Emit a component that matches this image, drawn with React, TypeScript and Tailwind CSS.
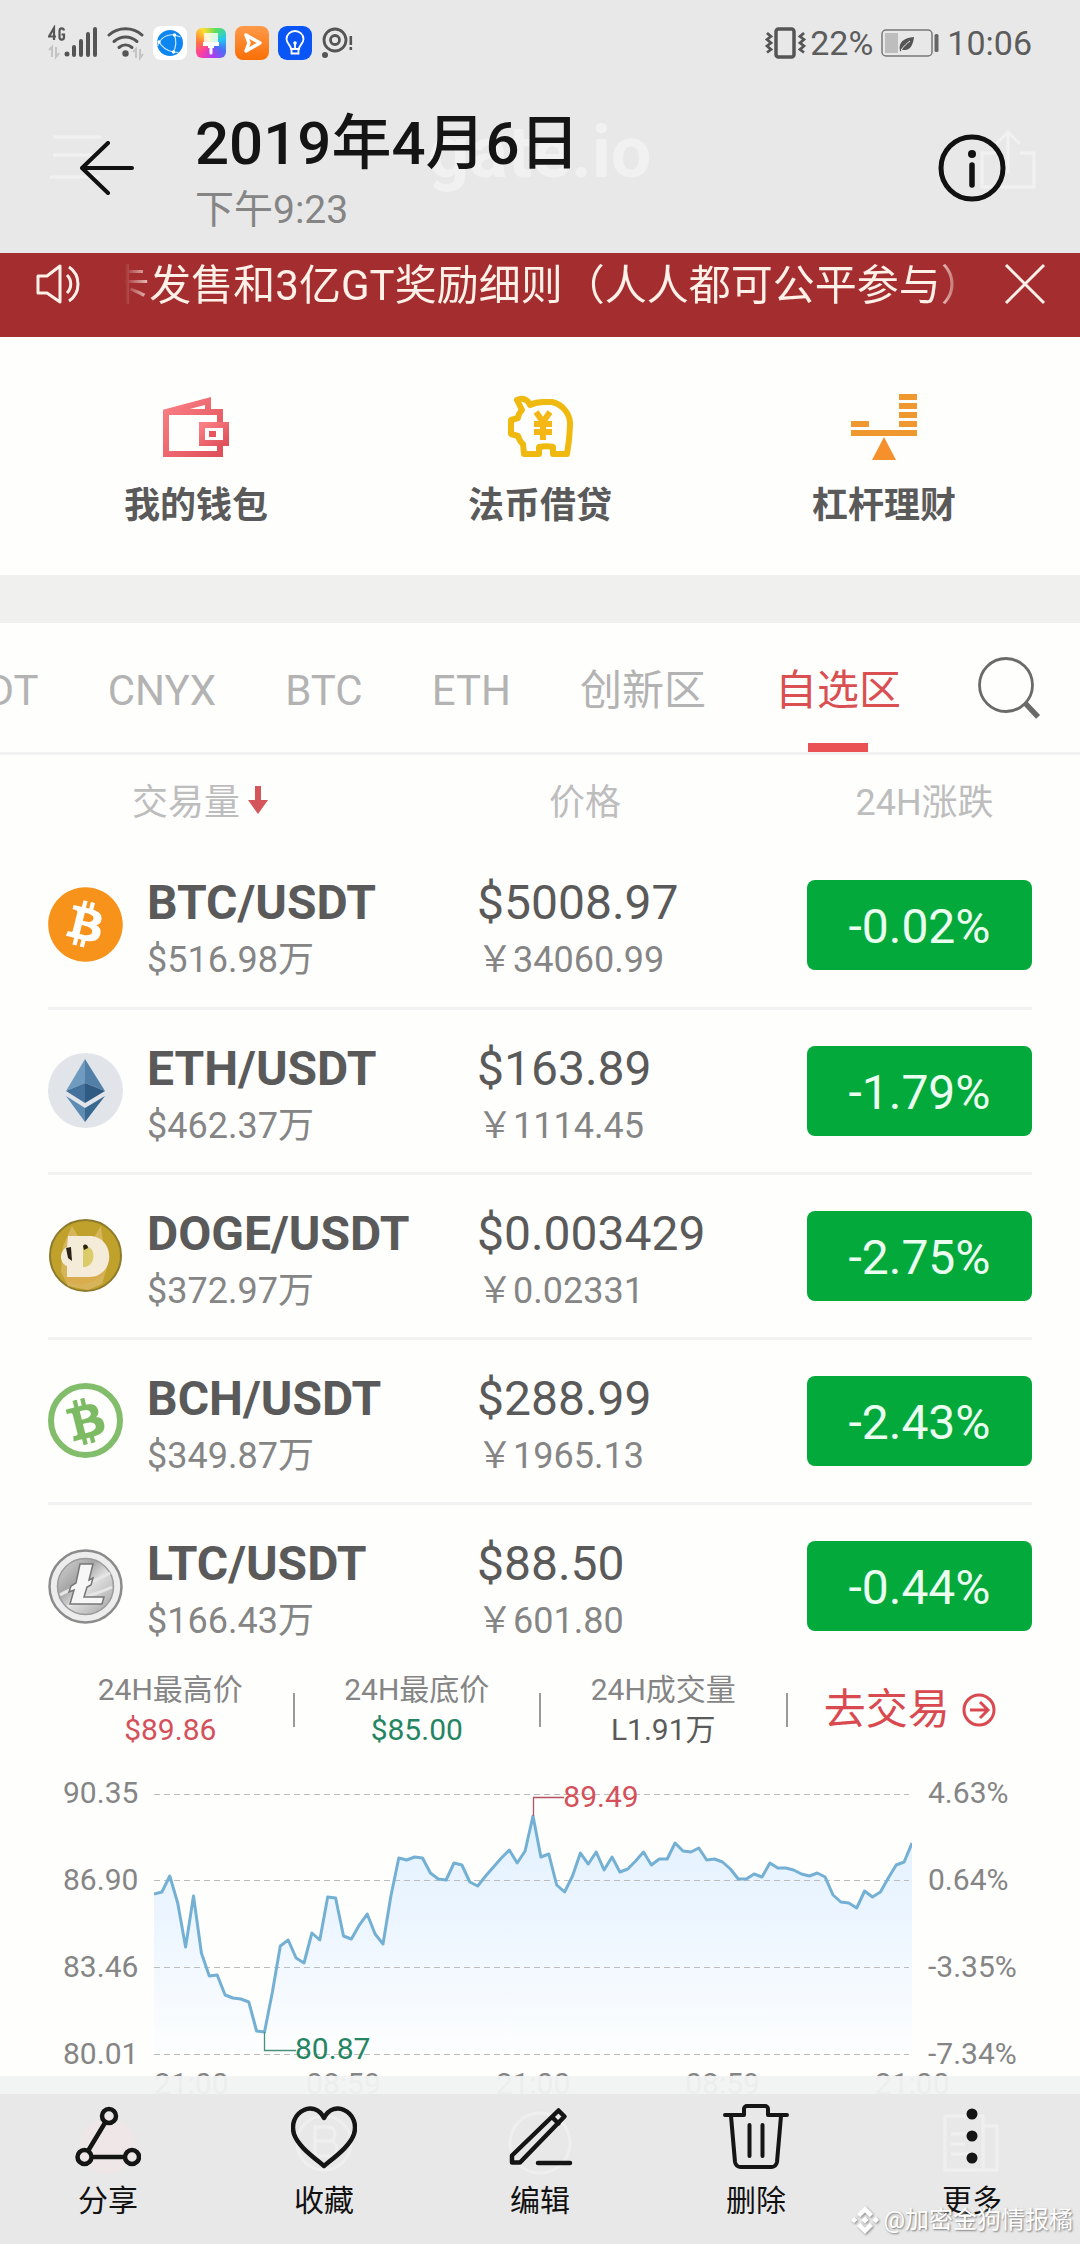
import type { ReactNode } from "react";
import { FaBitcoin, FaBtc } from "react-icons/fa";

/* ---------- status bar ---------- */

function SignalIcon() {
  return (
    <svg className="h-9 w-[50px]" viewBox="0 0 50 36" fill="#555">
      <g fill="none" stroke="#555" strokeWidth="2.2">
        <path d="M6 15V3L1 11.500H8" />
        <path d="M16 5.500C15.500 2.500 11.500 2.500 11.500 6V12C11.500 15.500 16 15.500 16 12V9.500H13.500" />
      </g>
      <g fill="none" stroke="#c4c4c4" strokeWidth="2">
        <path d="M1 25l3-3v10M8 22v10l3-4" />
      </g>
      <circle cx="19" cy="29" r="2.500" />
      <rect x="24" y="20" width="4" height="12" rx="2" />
      <rect x="31" y="14" width="4" height="18" rx="2" />
      <rect x="38" y="7" width="4" height="25" rx="2" />
      <rect x="45" y="2" width="4" height="30" rx="2" />
    </svg>
  );
}

function WifiIcon() {
  return (
    <svg className="h-9 w-[37px]" viewBox="0 0 37 36" fill="none">
      <g stroke="#555" strokeWidth="3" strokeLinecap="round">
        <path d="M2 10C11 1.500 26 1.500 35 10" />
        <path d="M7 16.500c7-6 16-6 23 0" />
        <path d="M12 22.500c4-3.500 9-3.500 13 0" />
      </g>
      <circle cx="18.500" cy="28.500" r="3.200" fill="#555" />
      <path d="M26 27l3-3v9M33 24v9l3-4" stroke="#c4c4c4" strokeWidth="2" />
    </svg>
  );
}

function BrowserAppIcon() {
  return (
    <svg className="size-[34px]" viewBox="0 0 34 34">
      <rect width="34" height="34" rx="8" fill="#fff" />
      <circle cx="17" cy="17" r="13" fill="#0e86f0" />
      <g fill="none" stroke="#cfeaff" strokeWidth="1.200">
        <path d="M6 16C11 9 16 8 22 9" />
        <path d="M21.500 9c2 6 2 11-1 17" />
        <path d="M6 16c3 5 8 9 14.500 10" />
        <path d="M21.500 9l6 2M20.500 26l5 .5M6 16L4.500 20" />
      </g>
      <circle cx="21.500" cy="9" r="1.700" fill="#fff" />
      <circle cx="6" cy="16" r="1.700" fill="#fff" />
      <circle cx="20.500" cy="26" r="1.700" fill="#fff" />
    </svg>
  );
}

function ThemeAppIcon() {
  return (
    <div className="size-[30px] rounded-md bg-[conic-gradient(from_20deg,#5ee05a,#21c7f0,#4a6cf5,#b43df0,#ff3f9b,#ff7b3a,#ffdc2e,#5ee05a)]">
      <svg className="size-[30px]" viewBox="0 0 30 30" fill="#fff">
        <path d="M8 5h14v9H8z" opacity=".8" />
        <path d="M7 14h16v4h-5v2h-6v-2H7z" />
        <path d="M13.500 20h3v5a1.500 1.500 0 0 1-3 0z" />
      </svg>
    </div>
  );
}

function VideoAppIcon() {
  return (
    <svg className="size-[34px]" viewBox="0 0 34 34">
      <defs>
        <linearGradient id="video" x1="0" y1="0" x2="0" y2="1">
          <stop offset="0" stopColor="#ff9a4a" />
          <stop offset="1" stopColor="#f96f06" />
        </linearGradient>
      </defs>
      <rect width="34" height="34" rx="8" fill="url(#video)" />
      <path
        d="M11 9l14 8-14 8 3-8z"
        fill="none"
        stroke="#fff"
        strokeLinejoin="round"
        strokeWidth="3.500"
      />
    </svg>
  );
}

function TipsAppIcon() {
  return (
    <svg className="size-[34px]" viewBox="0 0 34 34">
      <rect width="34" height="34" rx="9" fill="#0a55f5" />
      <g fill="none" stroke="#fff" strokeWidth="1.800">
        <path d="M13 23c0-4-4.500-5-4.500-10a8.500 8 0 0 1 17 0c0 5-4.500 6-4.500 10z" />
        <path d="M17 17v6M13.500 24v3.500h7V24" />
      </g>
      <circle cx="17" cy="17" r="1.800" fill="#fff" />
    </svg>
  );
}

function EyeAlertIcon() {
  return (
    <svg className="h-9 w-8" viewBox="0 0 32 36" fill="#555">
      <circle cx="14" cy="15" r="11" fill="none" stroke="#555" strokeWidth="2.800" />
      <circle cx="14" cy="15" r="4.500" fill="none" stroke="#555" strokeWidth="2.800" />
      <circle cx="4" cy="30" r="3" />
      <path d="M28.500 11h2.600v9h-2.600zM28.500 22h2.600v3h-2.600z" />
    </svg>
  );
}

function VibrateIcon() {
  return (
    <svg className="h-9 w-[41px]" viewBox="0 0 41 36" fill="none" stroke="#555">
      <rect x="11" y="4" width="18" height="28" rx="2.500" strokeWidth="3.500" />
      <path
        d="M2 8l4 3.500-4 3 4 3.500-4 3 4 3.500-4 3M39 8l-4 3.500 4 3-4 3.500 4 3-4 3.500 4 3"
        strokeWidth="2.800"
      />
    </svg>
  );
}

function BatteryIcon() {
  return (
    <svg className="h-9 w-[58px]" viewBox="0 0 58 36">
      <rect x="1" y="5" width="50" height="26" rx="4" fill="none" stroke="#777" strokeWidth="1.500" />
      <rect x="4" y="8" width="13" height="20" fill="#bdbdbd" />
      <path d="M19 26c-2-9 4-13 14-14-1 9-5 15-12 12.500l-1.500 2z" fill="#555" />
      <path d="M20 25c3-4 6-7 9-9" stroke="#e8e8e8" fill="none" />
      <rect x="53.500" y="9" width="4" height="18" rx="1.500" fill="#666" />
    </svg>
  );
}

function StatusBar() {
  return (
    <div className="flex h-[86px] items-center justify-between px-12 text-[34px] text-[#5c5c5c]">
      <div className="flex items-center gap-[9px]">
        <SignalIcon />
        <WifiIcon />
        <BrowserAppIcon />
        <ThemeAppIcon />
        <VideoAppIcon />
        <TipsAppIcon />
        <EyeAlertIcon />
      </div>
      <div className="flex items-center gap-1">
        <VibrateIcon />
        <span>22%</span>
        <span className="px-1">
          <BatteryIcon />
        </span>
        <span>10:06</span>
      </div>
    </div>
  );
}

/* ---------- photo header ---------- */

function Header() {
  return (
    <header className="relative bg-[#e8e8e8]">
      <div
        aria-hidden="true"
        className="pointer-events-none absolute inset-0 text-[#f1f1f1]"
      >
        <svg className="absolute top-[132px] left-12 h-14 w-16" viewBox="0 0 64 56">
          <path d="M5 5h48M5 23h40M2 45h50" stroke="currentColor" strokeWidth="3" />
        </svg>
        <span className="absolute top-[108px] left-[428px] font-bold text-[72px] leading-[90px]">
          gate.io
        </span>
        <svg
          className="absolute top-[128px] right-11 h-16 w-14"
          fill="none"
          stroke="currentColor"
          strokeWidth="3"
          viewBox="0 0 56 64"
        >
          <path d="M16 25H2v34h52V25H40M28 45V4M16 16L28 4l12 12" />
        </svg>
      </div>
      <div className="relative">
        <StatusBar />
        <div className="flex h-[167px] items-start pt-12 pr-[74px] pl-20">
          <button aria-label="返回" className="mr-[61px] flex h-[68px] items-center" type="button">
            <svg className="size-[54px]" viewBox="0 0 54 54" fill="none">
              <path
                d="M52 27H2M28 2L2 27l26 25"
                stroke="#111"
                strokeLinecap="round"
                strokeLinejoin="round"
                strokeWidth="4"
              />
            </svg>
          </button>
          <div className="-mt-6.5 flex-1">
            <h1 className="font-medium text-[#141414] text-[60px] leading-[72px]">
              2019年4月6日
            </h1>
            <p className="text-[#858585] text-[39px] leading-[60px]">下午9:23</p>
          </div>
          <button aria-label="详情" type="button">
            <svg className="size-[68px]" viewBox="0 0 68 68">
              <circle cx="34" cy="34" r="31" fill="none" stroke="#111" strokeWidth="5" />
              <circle cx="34" cy="20" r="4" fill="#111" />
              <path d="M34 31v20" stroke="#111" strokeLinecap="round" strokeWidth="5.500" />
            </svg>
          </button>
        </div>
      </div>
    </header>
  );
}

function Notice() {
  return (
    <div className="flex h-[84px] items-start bg-[#a32d2f] text-[#fff0e8]">
      <div className="flex h-[62px] w-[124px] items-center pl-9">
        <svg
          className="h-10 w-[45px]"
          fill="none"
          stroke="currentColor"
          strokeWidth="3"
          viewBox="0 0 45 40"
        >
          <path d="M2 12h9L24 2v36L11 29H2z" strokeLinejoin="round" />
          <path d="M31 11c5 5 5 13 0 18M33 3c12 8 12 26 0 34" />
        </svg>
      </div>
      <p className="flex h-16 min-w-0 flex-1 items-center justify-center overflow-hidden whitespace-nowrap text-[42px] [mask-image:linear-gradient(to_right,transparent,#000_32px,#000_calc(100%-32px),transparent)]">
        卡发售和3亿GT奖励细则（人人都可公平参与）
      </p>
      <button
        aria-label="关闭"
        className="flex h-[62px] w-[114px] items-center justify-center pl-1"
        type="button"
      >
        <svg className="size-11" viewBox="0 0 44 44">
          <path d="M3 3l38 38M41 3L3 41" stroke="currentColor" strokeWidth="3" />
        </svg>
      </button>
    </div>
  );
}

/* ---------- quick actions ---------- */

function WalletIcon() {
  return (
    <svg className="size-[66px]" viewBox="0 0 66 66" fill="none">
      <defs>
        <linearGradient id="wallet" x1="0" y1="0" x2="1" y2="1">
          <stop offset="0" stopColor="#fa7f84" />
          <stop offset="1" stopColor="#e0505a" />
        </linearGradient>
      </defs>
      <g stroke="url(#wallet)" strokeWidth="6">
        <path d="M3 18h54v12M57 49v11H3V18L45 7v10" />
        <path d="M39 31h24v18H39z" />
      </g>
      <rect x="46" y="37" width="7" height="6" fill="#e5565f" />
    </svg>
  );
}

function PiggyIcon() {
  return (
    <svg className="size-[66px]" viewBox="0 0 66 66" fill="none">
      <g stroke="#f0b90f" strokeLinejoin="round" strokeWidth="6">
        <path d="M10 6c6-3 11 0 13 5 4-2 8-3 14-3h8c10 2 19 12 18 24l-1 14-2 14H46v-7c-4-1-9-1-14 0v7H17l-1-10c-3-2-4-5-5-8l-7-2V26l7-2c0-3 1-5 4-8z" />
      </g>
      <path d="M29 18l7 10 7-10M36 27v19M27 30h18M27 38h18" stroke="#f5b716" strokeWidth="6" />
    </svg>
  );
}

function LeverIcon() {
  return (
    <svg className="size-[66px]" viewBox="0 0 66 66" fill="#ef982f">
      <path d="M48 0h18v6H48zM48 9h18v6H48zM48 18h18v6H48zM48 27h18v6H48zM0 27h18v6H0zM0 36h66v6H0z" />
      <path d="M33 43l12 23H21z" fill="#f5902c" />
    </svg>
  );
}

function QuickAction({ icon, label }: { icon: ReactNode; label: string }) {
  return (
    <button
      className="flex flex-1 flex-col items-center gap-[19px] pt-[57px] pb-[42px] font-bold text-4xl text-[#5a5a5a] leading-[54px]"
      type="button"
    >
      {icon}
      {label}
    </button>
  );
}

/* ---------- market list ---------- */

const tabs = ["USDT", "CNYX", "BTC", "ETH", "创新区", "自选区"];

function MarketTabs() {
  return (
    <nav className="flex h-[132px] border-[#f2f2f2] border-b-[3px]">
      <div className="flex min-w-0 flex-1 justify-end gap-[69px] overflow-hidden text-[#b3b3b3] text-[42px]">
        {tabs.map((tab) =>
          tab === "自选区" ? (
            <button
              aria-current="page"
              className="relative shrink-0 pt-1.5 text-[#d94f52]"
              key={tab}
              type="button"
            >
              {tab}
              <span className="absolute bottom-0 left-1/2 h-[9px] w-[60px] -translate-x-1/2 bg-[#e95154]" />
            </button>
          ) : (
            <button className="shrink-0 pt-1.5" key={tab} type="button">
              {tab}
            </button>
          )
        )}
      </div>
      <button
        aria-label="搜索"
        className="flex w-[179px] items-center pl-[77px]"
        type="button"
      >
        <svg className="size-[62px]" viewBox="0 0 62 62" fill="none" stroke="#6a6a6a">
          <circle cx="28" cy="28" r="26.500" strokeWidth="2.800" />
          <path d="M47 46l13 14" strokeWidth="5.500" />
        </svg>
      </button>
    </nav>
  );
}

function BtcLogo() {
  return (
    <span className="flex size-[75px] items-center justify-center bg-[radial-gradient(circle,#fff_32px,transparent_33px)]">
      <FaBitcoin color="#f7931a" size={77} className="shrink-0" />
    </span>
  );
}

function EthLogo() {
  return (
    <svg className="size-[75px]" viewBox="0 0 75 75">
      <circle cx="37.500" cy="37.500" r="37.500" fill="#e1e4e9" />
      <path d="M37 6L18 38l19-8z" fill="#6f9bc0" />
      <path d="M37 6l20 32-20-8z" fill="#527fa8" />
      <path d="M37 30l-19 8 19 12z" fill="#44729c" />
      <path d="M37 30l20 8-20 12z" fill="#2f5a82" />
      <path d="M18 43l19 12v14z" fill="#5d8bb2" />
      <path d="M57 43L37 55v14z" fill="#396890" />
    </svg>
  );
}

function DogeLogo() {
  return (
    <svg className="size-[75px]" viewBox="0 0 75 75">
      <circle cx="37.500" cy="37.500" r="35.500" fill="#bfa12c" stroke="#8d7a2c" strokeWidth="2" />
      <path d="M24 8l6 10 16 1 7-11 2 16 5 22-6 20-14 6-20-4-7-14 2-26z" fill="#d6b45a" />
      <path d="M16 60c10-6 26-8 42-8-6 14-34 20-42 8z" fill="#d9ad4e" />
      <path
        d="M20 18h21c27 0 27 41 0 41H19V48c-8-3-8-15 0-19z"
        fill="#f4ecd9"
      />
      <path d="M35 28c14-2 14 21 0 21z" fill="#dccb6a" />
      <path d="M18 30l5-1 1 14-4-3z" fill="#2a2416" />
      <path d="M35 28c2-3 5-1 5 2l-4 2z" fill="#2a2416" />
    </svg>
  );
}

function BchLogo() {
  return (
    <span className="flex size-[75px] items-center justify-center rounded-full border-[6px] border-[#82bd6b] text-[#7cbb63]">
      <FaBtc className="-rotate-14" size={46} />
    </span>
  );
}

function LtcLogo() {
  return (
    <svg className="size-[75px]" viewBox="0 0 75 75">
      <defs>
        <linearGradient id="ltc" x1="0" y1="0" x2="1" y2="1">
          <stop offset="0" stopColor="#d8d8d8" />
          <stop offset=".35" stopColor="#a6a6a6" />
          <stop offset=".55" stopColor="#dedede" />
          <stop offset="1" stopColor="#a0a0a0" />
        </linearGradient>
      </defs>
      <circle cx="37.500" cy="37.500" r="36" fill="#ededed" stroke="#8b8b8b" strokeWidth="2.500" />
      <circle cx="37.500" cy="37.500" r="28" fill="url(#ltc)" stroke="#9b9b9b" strokeWidth="1.500" />
      <path d="M12 46c16-10 34-12 50-22M20 58c14-12 28-12 44-20" stroke="#e6e6e6" strokeWidth="3" fill="none" />
      <path
        d="M32 15h13l-4 16 4-2-2 7-4 2-3 10h20l-2 7H22l4-14-5 2 2-6 5-3z"
        fill="#f7f7f7"
        stroke="#777"
        strokeWidth="1.500"
      />
    </svg>
  );
}

const markets = [
  {
    pair: "BTC/USDT",
    logo: <BtcLogo />,
    volume: "$516.98万",
    price: "$5008.97",
    cny: "￥34060.99",
    change: "-0.02%",
  },
  {
    pair: "ETH/USDT",
    logo: <EthLogo />,
    volume: "$462.37万",
    price: "$163.89",
    cny: "￥1114.45",
    change: "-1.79%",
  },
  {
    pair: "DOGE/USDT",
    logo: <DogeLogo />,
    volume: "$372.97万",
    price: "$0.003429",
    cny: "￥0.02331",
    change: "-2.75%",
  },
  {
    pair: "BCH/USDT",
    logo: <BchLogo />,
    volume: "$349.87万",
    price: "$288.99",
    cny: "￥1965.13",
    change: "-2.43%",
  },
  {
    pair: "LTC/USDT",
    logo: <LtcLogo />,
    volume: "$166.43万",
    price: "$88.50",
    cny: "￥601.80",
    change: "-0.44%",
  },
];

function MarketTable() {
  return (
    <div className="px-12">
      <table className="w-full table-fixed">
        <thead>
          <tr className="h-[88px] text-left text-4xl text-[#bdbdbd]">
            <th className="w-[429px] pt-2 pl-[84px] font-normal">
              <span className="flex items-center gap-2">
                交易量
                <svg className="-mt-1.5 h-7 w-5" viewBox="0 0 20 28" fill="#d4565b">
                  <path d="M7 0h6v14h7L10 28 0 14h7z" />
                </svg>
              </span>
            </th>
            <th className="pt-2 pl-[72px] font-normal">价格</th>
            <th className="w-[225px] pt-2 pl-2.5 text-center font-normal">24H涨跌</th>
          </tr>
        </thead>
        <tbody>
          {markets.map((m) => (
            <tr
              className="h-[165px] border-[#f2f2f2] border-b-[3px] last:border-b-0"
              key={m.pair}
            >
              <td>
                <div className="flex items-center gap-6">
                  {m.logo}
                  <div className="pt-2.5">
                    <div className="font-bold text-5xl text-[#5a5a5a] leading-[60px]">
                      {m.pair}
                    </div>
                    <div className="text-4xl text-[#858585] leading-[54px]">
                      {m.volume}
                    </div>
                  </div>
                </div>
              </td>
              <td className="pt-2.5">
                <div className="text-5xl text-[#5a5a5a] leading-[60px]">{m.price}</div>
                <div className="text-4xl text-[#858585] leading-[54px]">{m.cny}</div>
              </td>
              <td>
                <button
                  className="h-[90px] w-full rounded-lg bg-[#04a93b] pt-1 text-5xl text-[#eafff0]"
                  type="button"
                >
                  {m.change}
                </button>
              </td>
            </tr>
          ))}
        </tbody>
      </table>
    </div>
  );
}

/* ---------- selected pair details ---------- */

function Stats() {
  return (
    <div className="flex items-center px-12 pt-0.5 text-center text-3xl text-[#858585] leading-10">
      <dl className="flex flex-1 flex-col">
        <dt>24H最高价</dt>
        <dd className="text-[#d4505a]">$89.86</dd>
      </dl>
      <span className="h-[34px] w-0.5 bg-[#9a9a9a]" />
      <dl className="flex flex-1 flex-col">
        <dt>24H最底价</dt>
        <dd className="text-[#258563]">$85.00</dd>
      </dl>
      <span className="h-[34px] w-0.5 bg-[#9a9a9a]" />
      <dl className="flex flex-1 flex-col">
        <dt>24H成交量</dt>
        <dd className="text-[#5a5a5a]">L1.91万</dd>
      </dl>
      <span className="h-[34px] w-0.5 bg-[#9a9a9a]" />
      <a
        className="flex flex-1 items-center justify-center gap-3 text-[#d94a50] text-[42px]"
        href="#trade"
      >
        去交易
        <svg className="size-[34px]" viewBox="0 0 34 34" fill="none" stroke="currentColor">
          <circle cx="17" cy="17" r="15" strokeWidth="3" />
          <path d="M8 17h17M18 9l8 8-8 8" strokeWidth="3" />
        </svg>
      </a>
    </div>
  );
}

// distance of each half-hour price below the top grid line
const series = [
  100, 98, 82, 109, 153, 102, 159, 182, 181, 201, 204, 205, 208, 237, 238, 198,
  152, 146, 164, 169, 139, 146, 103, 104, 142, 145, 131, 120, 140, 150, 102, 64,
  66, 63, 64, 79, 85, 86, 69, 71, 88, 92, 82, 73, 64, 56, 69, 57, 22, 63, 60, 91,
  98, 82, 59, 70, 58, 76, 63, 78, 75, 67, 58, 71, 65, 65, 49, 57, 58, 54, 66, 65,
  68, 75, 85, 85, 80, 83, 69, 74, 74, 76, 80, 82, 79, 83, 101, 108, 109, 114, 97,
  103, 98, 84, 71, 68, 49,
];

const TOP = 16;
const WIDTH = 758;
const step = WIDTH / (series.length - 1);
const line = series
  .map((y, i) => `${(i * step).toFixed(1)},${y + TOP}`)
  .join(" ");

function PriceChart() {
  return (
    <div className="mt-7">
      <div className="flex h-[291px] text-3xl text-[#858585] leading-[30px]">
        <div className="flex w-[154px] flex-col justify-between pl-[63px]">
          <span>90.35</span>
          <span>86.90</span>
          <span>83.46</span>
          <span>80.01</span>
        </div>
        <div className="relative min-w-0 flex-1">
          <svg
            aria-label="LTC/USDT"
            className="h-full w-full"
            fill="none"
            preserveAspectRatio="none"
            role="img"
            viewBox="0 0 758 291"
          >
            <defs>
              <linearGradient id="area" x1="0" y1="0" x2="0" y2="1">
                <stop offset="0" stopColor="#e2f1ff" />
                <stop offset=".5" stopColor="#eef6ff" />
                <stop offset="1" stopColor="#fdfefe" />
              </linearGradient>
            </defs>
            <polygon fill="url(#area)" points={`0,276 ${line} ${WIDTH},276`} />
            <path
              d="M0 16.500H755M0 102.500H755M0 189.500H755M0 276.500H755"
              stroke="#bcbcbc"
              strokeDasharray="6 4"
            />
            <polyline
              points={line}
              stroke="#74b0d3"
              strokeLinejoin="round"
              strokeWidth="3"
            />
            <path d="M379.500 38V19.500H410" stroke="#b5525f" strokeWidth="1.300" />
            <path d="M110.500 254V272.500H142" stroke="#4a917a" strokeWidth="1.300" />
          </svg>
          <span className="absolute top-1 left-[54%] text-[#d4505a]">89.49</span>
          <span className="absolute top-64 left-[141px] text-[#258563]">80.87</span>
        </div>
        <div className="flex w-[168px] flex-col justify-between pl-4">
          <span>4.63%</span>
          <span>0.64%</span>
          <span>-3.35%</span>
          <span>-7.34%</span>
        </div>
      </div>
      <div className="mr-[73px] ml-[59px] grid grid-cols-5 text-center text-3xl text-[#858585] leading-[30px]">
        <span className="pl-[95px] text-left">21:00</span>
        <span>08:59</span>
        <span>21:00</span>
        <span>08:59</span>
        <span>21:00</span>
      </div>
    </div>
  );
}

/* ---------- bottom toolbar ---------- */

const iconClass = "size-[66px]";

const actions = [
  {
    label: "分享",
    icon: (
      <svg className={iconClass} viewBox="0 0 66 66" fill="none" stroke="#151515" strokeWidth="4.500">
        <circle cx="34" cy="13" r="7" />
        <circle cx="9.500" cy="54" r="7" />
        <circle cx="57" cy="54" r="7" />
        <path d="M30.500 19L13 48M16.500 54H50" />
      </svg>
    ),
  },
  {
    label: "收藏",
    icon: (
      <svg className={iconClass} viewBox="0 0 66 66" fill="none" stroke="#151515" strokeWidth="4.500">
        <path
          d="M33 15C28 5 19 4 13 7 4 11 0 21 3 31c4 12 18 22 30 32 12-10 26-20 30-32 3-10-1-20-10-24-6-3-15-2-20 8z"
          strokeLinejoin="round"
        />
      </svg>
    ),
  },
  {
    label: "编辑",
    icon: (
      <svg
        className={iconClass}
        fill="none"
        stroke="#151515"
        strokeLinecap="round"
        strokeLinejoin="round"
        strokeWidth="4.500"
        viewBox="0 0 66 66"
      >
        <path d="M51.500 7.500l6 6L13 59.500H5v-7zM45 14l6.500 6.500M31 60h32" />
      </svg>
    ),
  },
  {
    label: "删除",
    icon: (
      <svg
        className={iconClass}
        fill="none"
        stroke="#151515"
        strokeLinecap="round"
        strokeLinejoin="round"
        strokeWidth="4"
        viewBox="0 0 66 66"
      >
        <path d="M2 12h19V6a3 3 0 0 1 3-3h18a3 3 0 0 1 3 3v6h19M8 13l4 46a6 6 0 0 0 6 5h30a6 6 0 0 0 6-5l4-46M26.500 22v31M39.500 22v31" />
      </svg>
    ),
  },
  {
    label: "更多",
    icon: (
      <svg className={iconClass} viewBox="0 0 66 66" fill="#151515">
        <circle cx="33" cy="11" r="5.500" />
        <circle cx="33" cy="33" r="5.500" />
        <circle cx="33" cy="55" r="5.500" />
      </svg>
    ),
  },
];

function Toolbar() {
  return (
    <footer className="relative -mt-[23px]">
      <div className="h-[18px] bg-[#f1f2f2]/95" />
      <div className="relative bg-[#e8e8e8]">
        <div
          aria-hidden="true"
          className="pointer-events-none absolute inset-0 grid grid-cols-5 justify-items-center pt-4 text-3xl text-[#efefef]"
        >
          <span className="mt-2 size-14 rounded-full bg-[#f3e4e6] opacity-60" />
          <svg className="size-[66px]" viewBox="0 0 66 66" fill="none" stroke="currentColor" strokeWidth="3">
            <circle cx="33" cy="33" r="27" />
            <path d="M24 17h14c8 0 8 14 0 14H24zM24 31h15c9 0 9 15 0 15H24z" />
          </svg>
          <svg className="size-[66px]" viewBox="0 0 66 66" fill="none" stroke="currentColor" strokeWidth="3">
            <circle cx="33" cy="33" r="30" />
          </svg>
          <span />
          <svg className="size-[66px]" viewBox="0 0 66 66" fill="none" stroke="currentColor" strokeWidth="3">
            <path d="M6 6h38v54H6zM44 16h14v44H44M12 24h20M12 34h14M12 44h20" />
          </svg>
        </div>
        <div className="relative grid grid-cols-5 pt-[9px] pb-[21px]">
          {actions.map((a) => (
            <button
              className="flex flex-col items-center gap-2.5 text-3xl text-[#111] leading-[44px]"
              key={a.label}
              type="button"
            >
              {a.icon}
              {a.label}
            </button>
          ))}
        </div>
        <div className="absolute right-[7px] bottom-2 flex items-center gap-1 text-2xl text-white leading-8 [text-shadow:1px_1px_2px_#777]">
          <svg
            className="size-7 drop-shadow-[1px_1px_1px_#888]"
            fill="#fff"
            viewBox="0 0 28 28"
          >
            <path d="M14 0l8 8-3.200 3.200L14 6.400l-4.800 4.800L6 8zM14 10.500l3.500 3.500-3.500 3.500-3.500-3.500zM3.200 10.800L6.400 14l-3.200 3.200L0 14zM24.800 10.800L28 14l-3.200 3.200-3.200-3.200zM14 28l-8-8 3.200-3.200 4.800 4.800 4.800-4.800L22 20z" />
          </svg>
          @加密金狗情报橘
        </div>
      </div>
    </footer>
  );
}

export default function App() {
  return (
    <div className="overflow-x-hidden bg-[#fefefd] font-[Roboto,'Noto_Sans_CJK_SC',sans-serif]">
      <Header />
      <Notice />
      <section className="flex px-6">
        <QuickAction icon={<WalletIcon />} label="我的钱包" />
        <QuickAction icon={<PiggyIcon />} label="法币借贷" />
        <QuickAction icon={<LeverIcon />} label="杠杆理财" />
      </section>
      <div className="h-12 bg-[#f0f0ef]" />
      <main>
        <MarketTabs />
        <MarketTable />
        <Stats />
        <PriceChart />
      </main>
      <Toolbar />
    </div>
  );
}
